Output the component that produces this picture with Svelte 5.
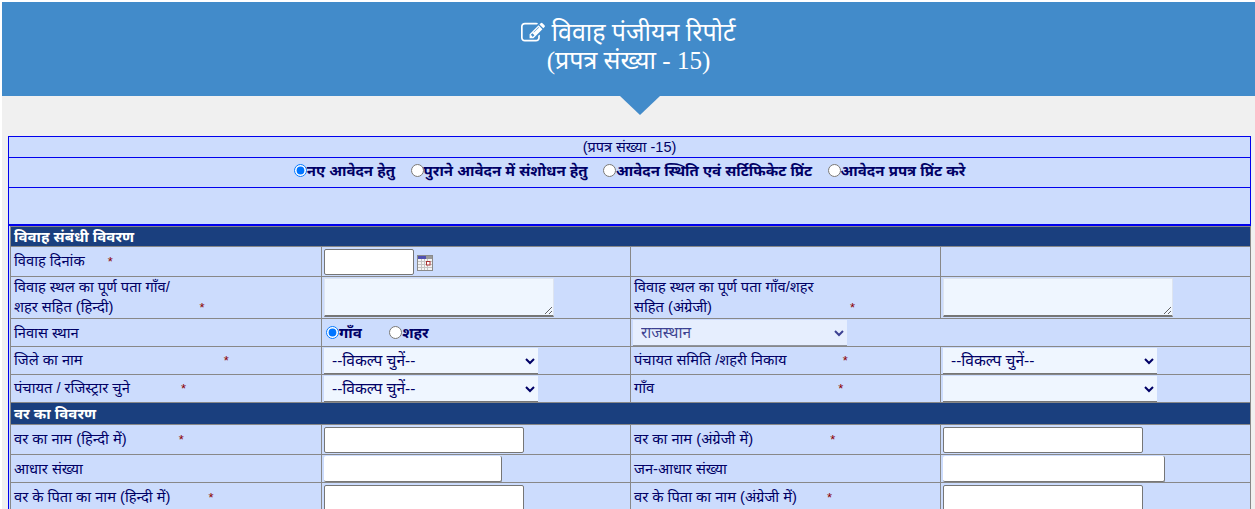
<script>
  // Marriage registration report, form 15
  const modes = ['नए आवेदन हेतु', 'पुराने आवेदन में संशोधन हेतु', 'आवेदन स्थिति एवं सर्टिफिकेट प्रिंट', 'आवेदन प्रपत्र प्रिंट करे'];
  const pick = '--विकल्प चुनें--';
</script>

<div class="page">
  <header class="banner">
    <h1>
      <svg class="edit" viewBox="0 0 1792 1792" aria-hidden="true"><path fill="currentColor" d="M888 1184l116-116-152-152-116 116v56h96v96h56zm440-720q-16-16-33 1l-350 350q-17 17-1 33t33-1l350-350q17-17 1-33zm80 594v190q0 119-84.5 203.5t-203.5 84.5h-832q-119 0-203.5-84.5t-84.5-203.5v-832q0-119 84.5-203.5t203.5-84.5h832q63 0 117 25 15 7 18 23 3 17-9 29l-49 49q-14 14-32 8-23-6-45-6h-832q-66 0-113 47t-47 113v832q0 66 47 113t113 47h832q66 0 113-47t47-113v-126q0-13 9-22l64-64q15-15 35-7t20 29zm-96-738l288 288-672 672h-288v-288zm444 132l-92 92-288-288 92-92q28-28 68-28t68 28l152 152q28 28 28 68t-28 68z"/></svg>
      विवाह पंजीयन रिपोर्ट<br />(प्रपत्र संख्या - 15)
    </h1>
    <span class="arrow"></span>
  </header>

  <section class="box">
    <div class="caption">(प्रपत्र संख्या -15)</div>
    <div class="modes">
      {#each modes as m, i}
        <label><input type="radio" name="mode" checked={i === 0} />{m}</label>
      {/each}
    </div>
    <div class="blank"></div>

    <table>
      <colgroup><col class="c1" /><col class="c2" /><col class="c3" /><col class="c4" /></colgroup>
      <tbody>
        <tr class="head"><td colspan="4">विवाह संबंधी विवरण</td></tr>
        <tr class="r30">
          <td>विवाह दिनांक <b class="star s1">*</b></td>
          <td class="field">
            <div class="date">
              <input class="in-date" type="text" />
              <svg class="cal" viewBox="0 0 16 16" aria-hidden="true">
                <rect x="0.5" y="0.5" width="15" height="15" fill="#f4f4f4" stroke="#8a8a8a" />
                <rect x="1" y="1" width="14" height="3" fill="#9a9a9a" />
                <rect x="1" y="1" width="8" height="3" fill="#5050b0" />
                <path d="M1 6.5h14M1 9.5h14M1 12.5h14M4.500 4v11M7.500 4v11M10.500 4v11" stroke="#c4c4c4" fill="none" />
                <rect x="9.500" y="6.500" width="3.500" height="3.500" fill="#fff" stroke="#a83030" />
              </svg>
            </div>
          </td>
          <td></td>
          <td></td>
        </tr>
        <tr class="r41">
          <td>विवाह स्थल का पूर्ण पता गाँव/<br />शहर सहित (हिन्दी) <b class="star s2">*</b></td>
          <td class="field"><textarea></textarea></td>
          <td>विवाह स्थल का पूर्ण पता गाँव/शहर<br />सहित (अंग्रेजी) <b class="star s3">*</b></td>
          <td class="field"><textarea></textarea></td>
        </tr>
        <tr class="r28">
          <td>निवास स्थान</td>
          <td class="field places">
            <label class="first"><input type="radio" name="place" checked />गाँव</label>
            <label><input type="radio" name="place" />शहर</label>
          </td>
          <td class="field state" colspan="2">
            <select disabled><option>राजस्थान</option></select>
          </td>
        </tr>
        <tr class="r28">
          <td>जिले का नाम <b class="star s4">*</b></td>
          <td class="field"><select><option>{pick}</option></select></td>
          <td>पंचायत समिति /शहरी निकाय <b class="star s5">*</b></td>
          <td class="field"><select><option>{pick}</option></select></td>
        </tr>
        <tr class="r28">
          <td>पंचायत / रजिस्ट्रार चुने <b class="star s6">*</b></td>
          <td class="field"><select><option>{pick}</option></select></td>
          <td>गाँव <b class="star s7">*</b></td>
          <td class="field"><select><option></option></select></td>
        </tr>
        <tr class="head second"><td colspan="4">वर का विवरण</td></tr>
        <tr class="r30">
          <td>वर का नाम (हिन्दी में) <b class="star s8">*</b></td>
          <td class="field"><input class="in-name" type="text" /></td>
          <td>वर का नाम (अंग्रेजी में) <b class="star s9">*</b></td>
          <td class="field"><input class="in-name" type="text" /></td>
        </tr>
        <tr class="r28">
          <td>आधार संख्या</td>
          <td class="field"><input class="in-aadhaar" type="text" /></td>
          <td>जन-आधार संख्या</td>
          <td class="field"><input class="in-jan" type="text" /></td>
        </tr>
        <tr class="r30">
          <td>वर के पिता का नाम (हिन्दी में) <b class="star s10">*</b></td>
          <td class="field"><input class="in-name" type="text" /></td>
          <td>वर के पिता का नाम (अंग्रेजी में) <b class="star s11">*</b></td>
          <td class="field"><input class="in-name" type="text" /></td>
        </tr>
      </tbody>
    </table>
  </section>
</div>

<style>
  :global(body) {
    margin: 0;
    background: #fff;
    overflow: hidden;
    font-family: "Liberation Sans", "Noto Sans", sans-serif;
  }
  .page {
    margin: 2px 0 0 2px;
    background: #f0f0f0;
    padding-bottom: 40px;
  }
  .banner {
    position: relative;
    height: 94px;
    background: #428bca;
    color: #fff;
    text-align: center;
  }
  h1 {
    margin: 0;
    padding-top: 17px;
    font-family: "Liberation Serif", "Noto Sans", serif;
    font-size: 25px;
    font-weight: 400;
    line-height: 28px;
  }
  .edit {
    width: 24px;
    height: 24px;
    vertical-align: -4px;
  }
  .arrow {
    position: absolute;
    left: 618px;
    top: 94px;
    border-left: 20px solid transparent;
    border-right: 20px solid transparent;
    border-top: 19px solid #428bca;
  }
  .box {
    margin: 40px 4px 0 6px;
    border: 1px solid #0000ee;
    background: #ccdcfd;
    color: #000066;
  }
  .caption {
    height: 20px;
    line-height: 20px;
    border-bottom: 1px solid #0000ee;
    text-align: center;
    font-size: 14.5px;
  }
  .modes {
    display: flex;
    justify-content: center;
    gap: 15.5px;
    height: 29px;
    border-bottom: 1px solid #0000ee;
    font-size: 15px;
    font-weight: 700;
    line-height: 26px;
  }
  .modes input,
  .places input {
    margin: 0;
    width: 13px;
    height: 13px;
    vertical-align: -1px;
  }
  .blank {
    height: 36px;
    border-bottom: 2px solid #0000ee;
  }
  table {
    table-layout: fixed;
    border-collapse: collapse;
    width: 1240px;
    margin-left: 1px;
    font-size: 14.7px;
    line-height: 20px;
  }
  .c1 { width: 311px; }
  .c2 { width: 309px; }
  .c3 { width: 310px; }
  .c4 { width: 310px; }
  td {
    border: 1px solid #888;
    padding: 0 0 0 3px;
    vertical-align: middle;
    overflow: visible;
    white-space: nowrap;
  }
  .head td {
    height: 19px;
    line-height: 18px;
    background: #1a3f7e;
    color: #fff;
    font-size: 15px;
    font-weight: 700;
  }
  .head.second td { height: 21px; }
  .r30 td { height: 29px; }
  .r41 td { height: 39px; line-height: 20px; }
  .r28 td { height: 27px; }
  td.field {
    padding: 0 0 0 2px;
    line-height: 0;
  }
  .star {
    color: #8b0000;
    font-weight: 400;
    font-size: 13px;
  }
  .s1 { margin-left: 19px; }
  .s2 { margin-left: 82px; }
  .s3 { margin-left: 134px; }
  .s4 { margin-left: 137px; }
  .s5 { margin-left: 52px; }
  .s6 { margin-left: 47px; }
  .s7 { margin-left: 180px; }
  .s8 { margin-left: 48px; }
  .s9 { margin-left: 73px; }
  .s10 { margin-left: 34px; }
  .s11 { margin-left: 26px; }
  input[type="text"] {
    box-sizing: border-box;
    height: 26px;
    margin: 0;
    padding: 0 3px;
    background: #fff;
    border: 1px solid #767676;
    border-radius: 2px;
    vertical-align: middle;
  }
  .in-date { width: 90px; }
  .in-name { width: 200px; }
  .in-aadhaar {
    width: 178px;
    border-width: 0 1px 1px 0 !important;
  }
  .in-jan {
    width: 222px;
    border-width: 0 1px 1px 0 !important;
  }
  .date {
    display: flex;
    align-items: center;
    gap: 3px;
  }
  .cal {
    width: 16px;
    height: 16px;
    margin-top: 3px;
  }
  textarea {
    box-sizing: border-box;
    display: block;
    width: 230px;
    height: 39px;
    margin: 0;
    padding: 2px;
    background: #eff6ff;
    border: 1px solid #dde4f0;
    border-bottom: 2px solid #767676;
  }
  select {
    box-sizing: border-box;
    display: block;
    width: 214px;
    height: 26px;
    padding: 0 4px;
    background: #eff6ff;
    color: #000066;
    border: 0;
    border-bottom: 1px solid #767676;
    font-family: inherit;
    font-size: 15.5px;
  }
  td.state { padding-left: 2px; }
  .state select:disabled {
    opacity: 0.7;
    background: #f2f7ff;
  }
  .places {
    font-size: 15px;
    font-weight: 700;
    color: #000066;
  }
  td.places { padding-left: 4px; }
  .places label {
    display: inline-block;
    line-height: 20px;
  }
  .first { width: 59px; }
</style>
